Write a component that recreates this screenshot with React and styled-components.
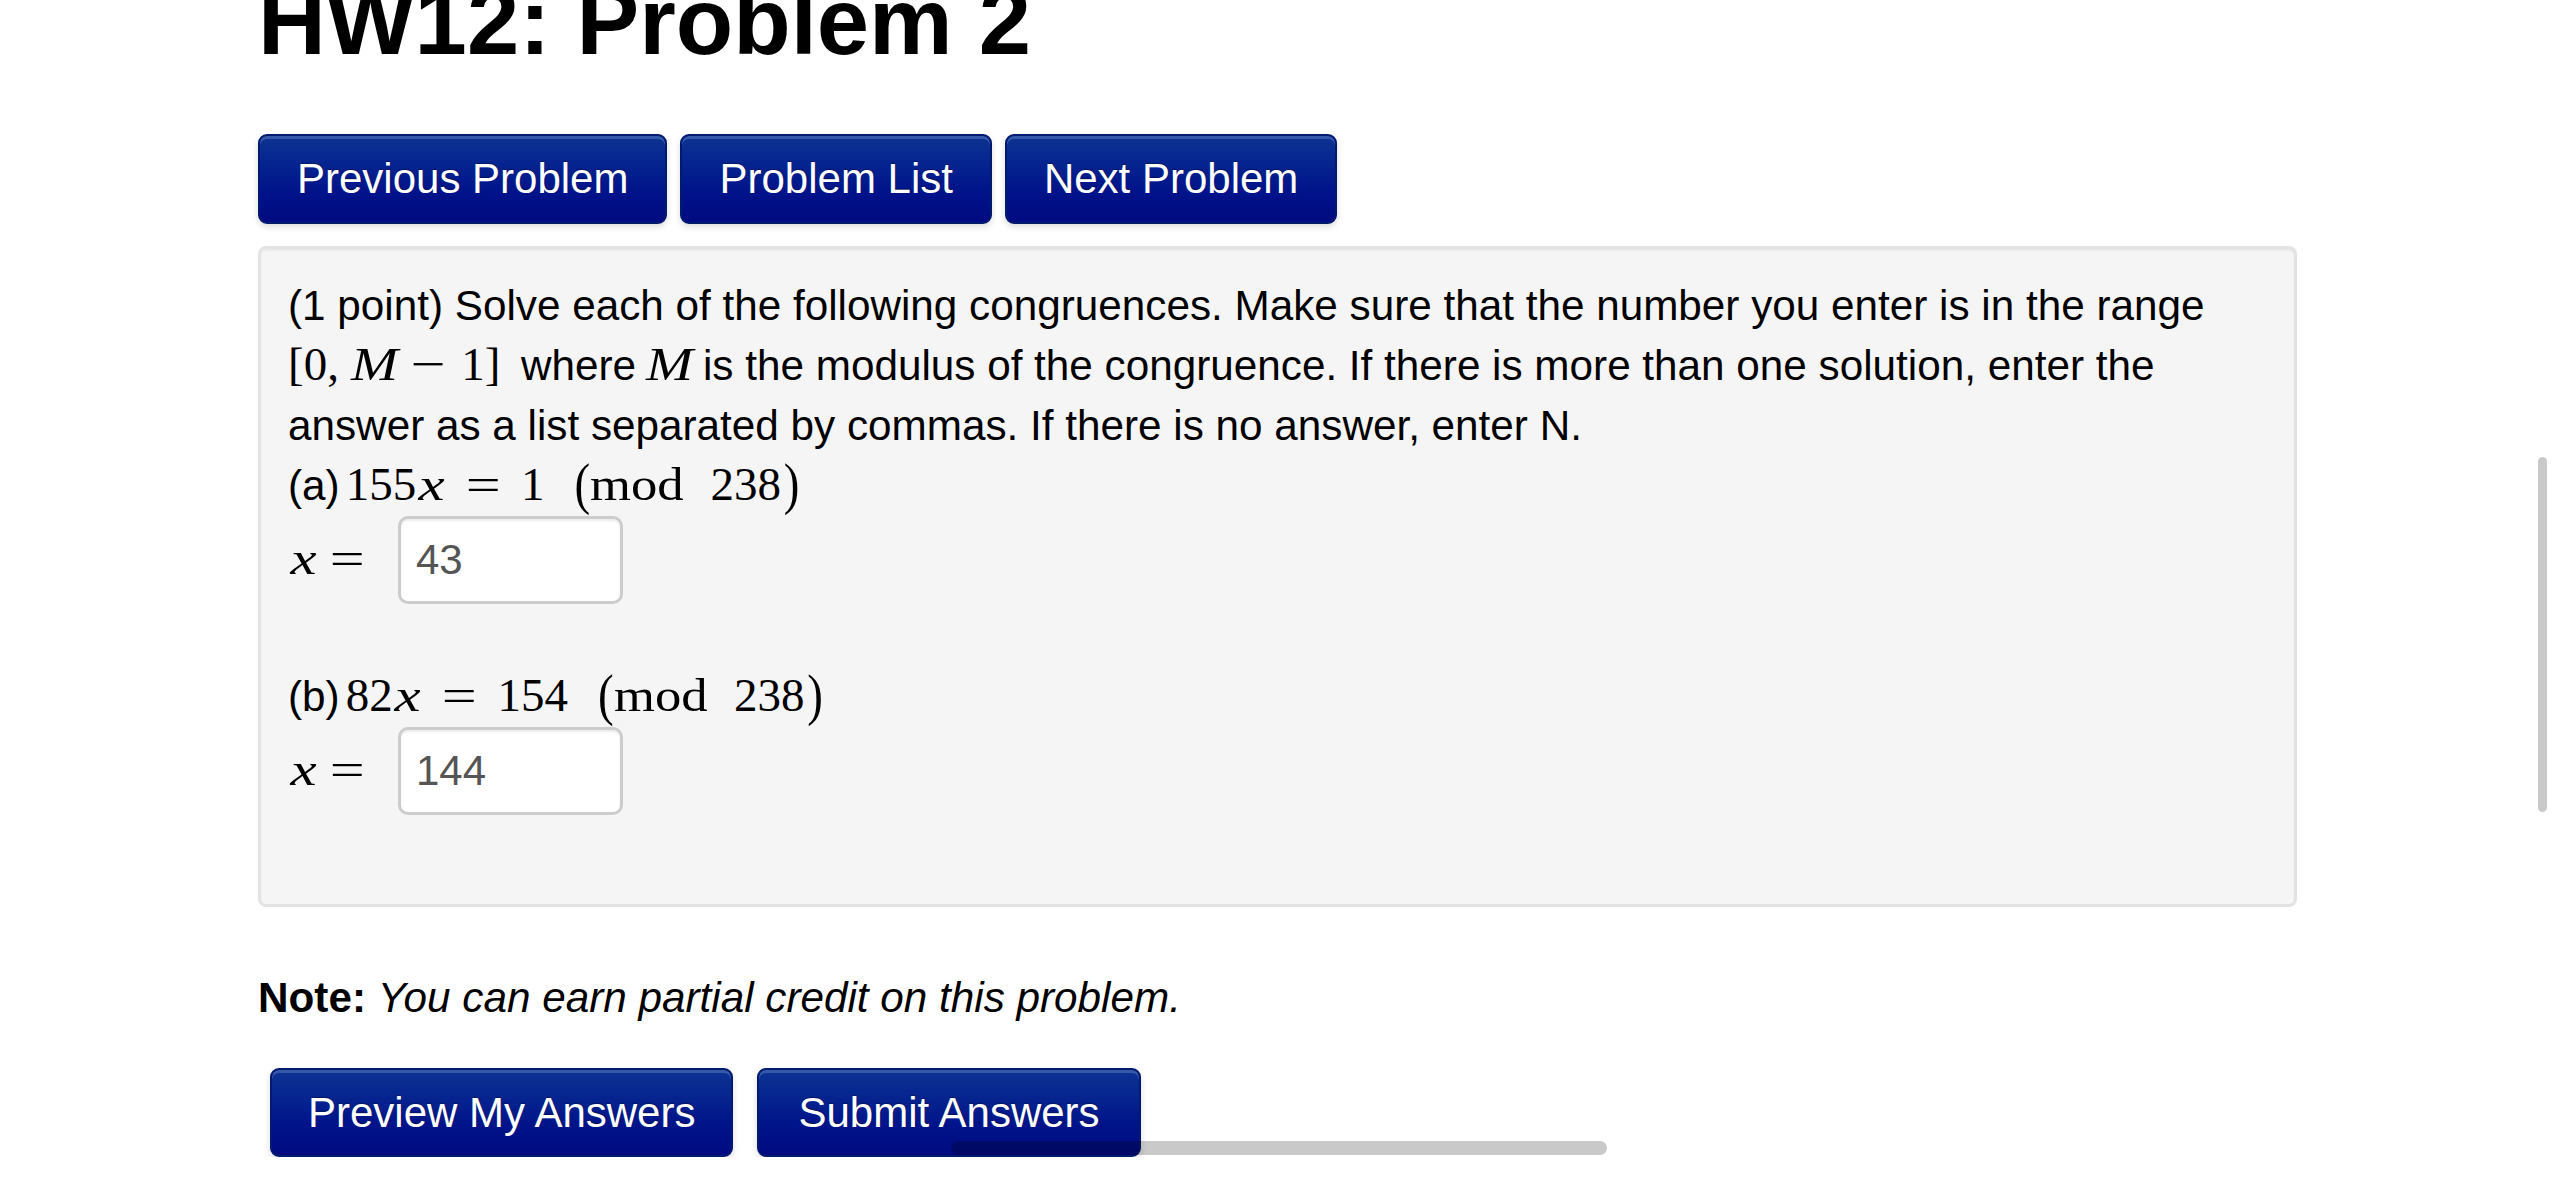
import React from 'react';
import styled, { createGlobalStyle } from 'styled-components';

const GlobalStyle = createGlobalStyle`
  html, body {
    margin: 0;
    padding: 0;
    background: #fff;
    overflow: hidden;
  }

  body {
    font-family: 'Liberation Sans', Arial, Helvetica, sans-serif;
    color: #000;
  }
`;

const Page = styled.div`
  width: 2039px;
  padding-left: 258px;
`;

const Title = styled.h1`
  margin: -25px 0 0;
  font-size: 94px;
  line-height: 94px;
  font-weight: bold;
`;

const ButtonBar = styled.div`
  display: flex;
  gap: ${(p) => p.gap}px;
  margin-top: ${(p) => p.top}px;
  margin-left: ${(p) => p.indent || 0}px;
`;

const NavButton = styled.button`
  box-sizing: border-box;
  height: ${(p) => p.h || 90}px;
  padding: 0 ${(p) => p.pad || 37}px;
  border: 2px solid #001a6e;
  border-radius: 9px;
  background: linear-gradient(to bottom, #0d3391 0%, #062590 30%, #00138a 65%, #000a80 100%);
  box-shadow: inset 0 3px 0 rgba(130, 160, 220, 0.35), 0 3px 6px rgba(0, 0, 0, 0.14);
  color: #fff;
  font-family: 'Liberation Sans', Arial, sans-serif;
  font-size: 42px;
  line-height: 1;
  text-shadow: 0 -1px 1px rgba(0, 0, 0, 0.35);
  white-space: nowrap;
  cursor: pointer;
`;

const Well = styled.div`
  box-sizing: border-box;
  margin-top: 22px;
  padding: 27px 27px 88px;
  background: #f5f5f5;
  border: 3px solid #e3e3e3;
  border-radius: 8px;
  box-shadow: inset 0 2px 2px rgba(0, 0, 0, 0.05);
  font-size: 42.25px;
  line-height: 60px;
`;

const Line = styled.div`
  height: 60px;
  white-space: nowrap;
`;

const MathText = styled.span`
  font-family: 'Liberation Serif', 'Times New Roman', serif;
  font-size: 47px;
  line-height: 1;
  white-space: nowrap;
  margin-left: ${(p) => p.lead || 0}px;
  margin-right: ${(p) => p.trail || 0}px;
`;

// italic variable, widened a little towards the Computer Modern shape
const Var = styled.i`
  display: inline-block;
  font-style: italic;
  margin: 0 0.05em 0 ${(p) => (p.big ? 0.04 : 0.1)}em;
  transform: scaleX(${(p) => (p.big ? 1.2 : 1.25)});
`;

// relation / binary operator in a box as wide as the TeX one
const Op = styled.span`
  display: inline-block;
  width: 0.778em;
  text-align: center;
  margin: 0 ${(p) => p.r}em 0 ${(p) => p.l}em;
  transform: scaleX(1.32);
`;

const Gap = styled.span`
  display: inline-block;
  width: ${(p) => p.w}em;
`;

const Paren = styled.span`
  display: inline-block;
  transform: scaleY(1.2);
  margin-left: ${(p) => p.left || 0}em;
`;

const Mod = styled.span`
  display: inline-block;
  transform: scaleX(1.12);
  transform-origin: left center;
  margin-right: 0.78em;
`;

const AnswerRow = styled.div`
  display: flex;
  align-items: center;
  height: 90px;
  margin-top: -1px;
`;

const AnswerLabel = styled.span`
  width: 110px;
  line-height: 60px;
`;

const AnswerBox = styled.input`
  box-sizing: border-box;
  width: 225px;
  height: 88px;
  padding: 0 15px;
  border: 3px solid #cccccc;
  border-radius: 10px;
  background: #fff;
  box-shadow: inset 0 2px 2px rgba(0, 0, 0, 0.075);
  color: #555;
  font-family: 'Liberation Sans', Arial, sans-serif;
  font-size: 42px;
  outline: none;
`;

const Spacer = styled.div`
  height: ${(p) => p.h}px;
`;

const Note = styled.p`
  margin: 61px 0 0;
  font-size: 42.25px;
  line-height: 60px;

  b {
    font-weight: bold;
  }

  i {
    font-style: italic;
  }
`;

const ScrollThumb = styled.div`
  position: fixed;
  left: ${(p) => p.x}px;
  top: ${(p) => p.y}px;
  width: ${(p) => p.w}px;
  height: ${(p) => p.h}px;
  border-radius: ${(p) => Math.min(p.w, p.h) / 2}px;
  background: rgba(0, 0, 0, 0.21);
`;

function Congruence({ a, b }) {
  return (
    <MathText lead={6}>
      {a}
      <Var>x</Var>
      <Op l={0.44} r={0.42}>=</Op>
      {b}
      <Paren left={0.64}>(</Paren>
      <Mod>mod</Mod>
      238
      <Paren left={0.06}>)</Paren>
    </MathText>
  );
}

function Answer({ value }) {
  return (
    <AnswerRow>
      <AnswerLabel>
        <MathText>
          <Var>x</Var>
          <Op l={0.28} r={0}>=</Op>
        </MathText>
      </AnswerLabel>
      <AnswerBox defaultValue={value} />
    </AnswerRow>
  );
}

export default function App() {
  return (
    <>
      <GlobalStyle />
      <Page>
        <Title>HW12: Problem 2</Title>

        <ButtonBar gap={13} top={65}>
          <NavButton>Previous Problem</NavButton>
          <NavButton>Problem List</NavButton>
          <NavButton>Next Problem</NavButton>
        </ButtonBar>

        <Well>
          <Line>
            (1 point) Solve each of the following congruences. Make sure that the number you enter is
            in the range
          </Line>
          <Line>
            <MathText trail={9}>
              [0,
              <Gap w={0.3} />
              <Var big>M</Var>
              <Op l={0.3} r={0.3}>−</Op>1]
            </MathText>{' '}
            where{' '}
            <MathText>
              <Var big>M</Var>
            </MathText>{' '}
            is the modulus of the congruence. If there is more than one solution, enter the
          </Line>
          <Line>answer as a list separated by commas. If there is no answer, enter N.</Line>
          <Line>
            (a)
            <Congruence a="155" b="1" />
          </Line>
          <Answer value="43" />
          <Spacer h={62} />
          <Line>
            (b)
            <Congruence a="82" b="154" />
          </Line>
          <Answer value="144" />
        </Well>

        <Note>
          <b>Note:</b> <i>You can earn partial credit on this problem.</i>
        </Note>

        <ButtonBar gap={24} top={40} indent={12}>
          <NavButton h={89} pad={36}>Preview My Answers</NavButton>
          <NavButton h={89} pad={39}>Submit Answers</NavButton>
        </ButtonBar>
      </Page>

      <ScrollThumb x={2538} y={457} w={9} h={355} />
      <ScrollThumb x={951} y={1141} w={656} h={14} />
    </>
  );
}
